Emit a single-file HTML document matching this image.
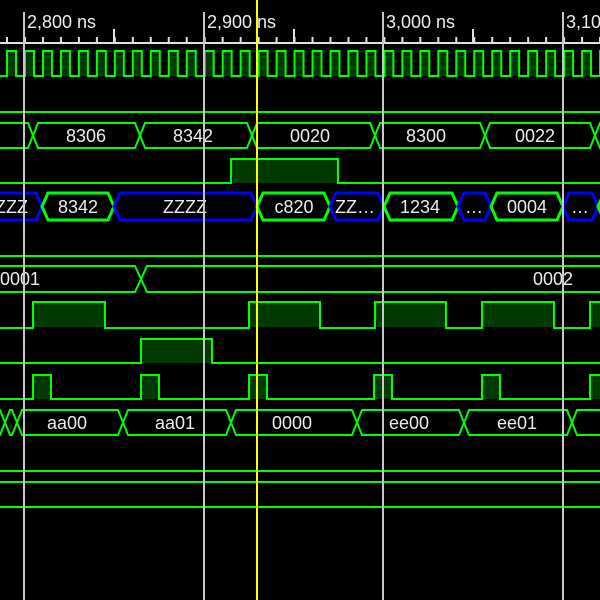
<!DOCTYPE html>
<html><head><meta charset="utf-8"><style>
html,body{margin:0;padding:0;background:#000;width:600px;height:600px;overflow:hidden}
svg{display:block}
text{font-family:"Liberation Sans",sans-serif;font-size:18px;fill:#ececec}
</style></head><body>
<svg width="600" height="600" viewBox="0 0 600 600" xmlns="http://www.w3.org/2000/svg">
<defs>
<pattern id="clk" patternUnits="userSpaceOnUse" x="21" y="0" width="17.97" height="600">
<rect x="4" y="51" width="9" height="25" fill="#003a00"/>
<path d="M-1,76 H4 V51 H13 V76 H19" fill="none" stroke="#00ff00" stroke-width="2"/>
</pattern>
<pattern id="tk" patternUnits="userSpaceOnUse" x="23.5" y="0" width="17.97" height="60">
<rect x="0.5" y="37" width="2" height="7" fill="#e0e0e0"/>
</pattern>
</defs>
<rect x="0" y="36" width="600" height="8" fill="url(#tk)"/>
<rect x="0" y="42" width="600" height="2" fill="#e0e0e0"/>
<rect x="113" y="29" width="2" height="15" fill="#e0e0e0"/>
<rect x="293" y="29" width="2" height="15" fill="#e0e0e0"/>
<rect x="472" y="29" width="2" height="15" fill="#e0e0e0"/>
<text x="27" y="28">2,800 ns</text>
<text x="207" y="28">2,900 ns</text>
<text x="386" y="28">3,000 ns</text>
<text x="566" y="28">3,100 ns</text>
<rect x="0" y="48" width="600" height="30" fill="url(#clk)"/>
<g fill="none" stroke="#00ff00" stroke-width="2">
<line x1="0" y1="112" x2="600" y2="112"/>
<polygon points="-20,135.5 -15,123 28,123 33,135.5 28,148 -15,148"/>
<polygon points="33,135.5 38,123 135,123 140,135.5 135,148 38,148"/>
<polygon points="140,135.5 145,123 247,123 252,135.5 247,148 145,148"/>
<polygon points="252,135.5 257,123 370,123 375,135.5 370,148 257,148"/>
<polygon points="375,135.5 380,123 480,123 485,135.5 480,148 380,148"/>
<polygon points="485,135.5 490,123 590,123 595,135.5 590,148 490,148"/>
<polygon points="595,135.5 600,123 700,123 700,148 600,148"/>
<rect x="231" y="159" width="107" height="24" fill="#003a00" stroke="none"/>
<path d="M0,183 H231 V159 H338 V183 H600"/>
<polygon stroke="#0000ff" stroke-width="3" points="-20,206.5 -14,193 36,193 42,206.5 36,220 -14,220"/>
<polygon points="42,206.5 48,193 108,193 114,206.5 108,220 48,220" stroke-width="3"/>
<polygon stroke="#0000ff" stroke-width="3" points="114,206.5 120,193 251,193 257,206.5 251,220 120,220"/>
<polygon points="257,206.5 263,193 324,193 330,206.5 324,220 263,220" stroke-width="3"/>
<polygon stroke="#0000ff" stroke-width="3" points="330,206.5 336,193 378,193 384,206.5 378,220 336,220"/>
<polygon points="384,206.5 390,193 452,193 458,206.5 452,220 390,220" stroke-width="3"/>
<polygon stroke="#0000ff" stroke-width="3" points="458,206.5 464,193 485,193 491,206.5 485,220 464,220"/>
<polygon points="491,206.5 497,193 557,193 563,206.5 557,220 497,220" stroke-width="3"/>
<polygon stroke="#0000ff" stroke-width="3" points="563,206.5 569,193 592,193 598,206.5 592,220 569,220"/>
<polygon points="598,206.5 604,193 700,193 700,220 604,220" stroke-width="3"/>
<line x1="0" y1="256" x2="600" y2="256"/>
<polygon points="-20,279 -14,266 135,266 141,279 135,292 -14,292"/>
<polygon points="141,279 147,266 700,266 700,292 147,292"/>
<g fill="#003a00" stroke="none">
<rect x="33" y="302" width="72" height="25"/><rect x="249" y="302" width="71" height="25"/>
<rect x="375" y="302" width="71" height="25"/><rect x="482" y="302" width="72" height="25"/>
<rect x="590" y="302" width="20" height="25"/>
<rect x="141" y="339" width="71" height="24"/>
<rect x="33" y="375" width="18" height="24"/><rect x="141" y="375" width="18" height="24"/>
<rect x="249" y="375" width="18" height="24"/><rect x="374" y="375" width="18" height="24"/>
<rect x="482" y="375" width="18" height="24"/><rect x="590" y="375" width="18" height="24"/>
</g>
<path d="M0,328 H33 V302 H105 V328 H249 V302 H320 V328 H375 V302 H446 V328 H482 V302 H554 V328 H590 V302 H610"/>
<path d="M0,363 H141 V339 H212 V363 H600"/>
<path d="M0,399 H33 V375 H51 V399 H141 V375 H159 V399 H249 V375 H267 V399 H374 V375 H392 V399 H482 V375 H500 V399 H590 V375 H610"/>
<polygon points="-20,422.5 -15,410 0,410 5,422.5 0,435 -15,435"/>
<polygon points="5,422.5 10,410 12,410 17,422.5 12,435 10,435"/>
<polygon points="17,422.5 22,410 118,410 123,422.5 118,435 22,435"/>
<polygon points="123,422.5 128,410 226,410 231,422.5 226,435 128,435"/>
<polygon points="231,422.5 236,410 352,410 357,422.5 352,435 236,435"/>
<polygon points="357,422.5 362,410 459,410 464,422.5 459,435 362,435"/>
<polygon points="464,422.5 469,410 567,410 572,422.5 567,435 469,435"/>
<polygon points="572,422.5 577,410 700,410 700,435 577,435"/>
<line x1="0" y1="471" x2="600" y2="471"/>
<line x1="0" y1="482" x2="600" y2="482"/>
<line x1="0" y1="507" x2="600" y2="507"/>
</g>
<g text-anchor="middle">
<text x="86" y="142">8306</text><text x="193" y="142">8342</text><text x="310" y="142">0020</text>
<text x="426" y="142">8300</text><text x="535" y="142">0022</text>
<text x="6" y="213">ZZZZ</text><text x="78" y="213">8342</text><text x="185" y="213">ZZZZ</text>
<text x="294" y="213">c820</text><text x="355" y="213">ZZ…</text><text x="420" y="213">1234</text>
<text x="474" y="213">…</text><text x="527" y="213">0004</text><text x="580" y="213">…</text>
<text x="20" y="285">0001</text><text x="553" y="285">0002</text>
<text x="67" y="429">aa00</text><text x="175" y="429">aa01</text><text x="292" y="429">0000</text>
<text x="409" y="429">ee00</text><text x="517" y="429">ee01</text>
</g>
<g fill="#c8c8c8">
<rect x="23" y="12" width="2" height="588"/><rect x="203" y="12" width="2" height="588"/>
<rect x="382" y="12" width="2" height="588"/><rect x="562" y="12" width="2" height="588"/>
</g>
<rect x="256" y="0" width="2" height="600" fill="#ffff00"/>
</svg>
</body></html>
